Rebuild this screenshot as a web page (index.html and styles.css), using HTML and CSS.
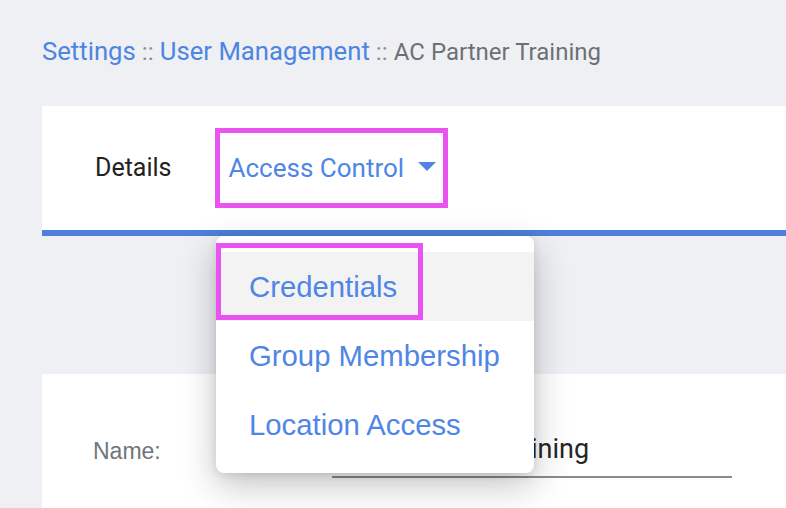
FILE: index.html
```html
<!DOCTYPE html>
<html lang="en">
<head>
<meta charset="utf-8">
<title>AC Partner Training</title>
<link rel="stylesheet" href="styles.css">
</head>
<body>
<div class="page">
  <nav class="breadcrumb">
    <a class="crumb-link">Settings</a><span class="sep"> :: </span><a class="crumb-link">User Management</a><span class="sep"> :: </span><span class="crumb-current">AC Partner Training</span>
  </nav>

  <div class="tabs-area">
    <div class="tab-bar">
      <div class="tab">Details</div>
      <div class="tab tab-active">
        <span class="tab-label">Access Control</span>
        <svg class="caret" width="18" height="9" viewBox="0 0 18 9"><polygon points="0,0 18,0 9,9" fill="#4f84e2"/></svg>
      </div>
    </div>

    <div class="menu">
      <div class="menu-item menu-item-hover">Credentials</div>
      <div class="menu-item">Group Membership</div>
      <div class="menu-item">Location Access</div>
      <div class="menu-mark"></div>
    </div>
  </div>

  <section class="panel">
    <div class="form-row">
      <label class="form-label">Name:</label>
      <div class="form-input">AC Partner Training</div>
    </div>
  </section>
</div>
</body>
</html>
```

FILE: styles.css
```css
html, body {
  margin: 0;
  padding: 0;
}

body {
  background: #eff0f4;
  font-family: Roboto, "Liberation Sans", sans-serif;
  width: 786px;
  height: 508px;
  overflow: hidden;
}

.page {
  padding-left: 42px;
}

.breadcrumb {
  padding-top: 36px;
  height: 30px;
  line-height: 30px;
  white-space: nowrap;
}

.crumb-link {
  font-size: 25.7px;
  color: #4d85e2;
}

.sep {
  font-size: 24.5px;
  color: #8a8e94;
}

.crumb-current {
  font-size: 24px;
  color: #6c7075;
}

.tabs-area {
  position: relative;
  margin-top: 40px;
}

.tab-bar {
  height: 124px;
  background: #ffffff;
  border-bottom: 6px solid #4d80da;
  display: flex;
  align-items: center;
  padding-left: 53px;
}

.tab {
  font-size: 25px;
  line-height: 30px;
  color: #222222;
}

.tab-active {
  margin-left: 43px;
  box-sizing: border-box;
  width: 233px;
  height: 80px;
  border: 5px solid #ea52f2;
  padding-left: 9px;
  display: flex;
  align-items: center;
  color: #4f86e6;
}

.tab-label {
  font-size: 26px;
}

.caret {
  margin-left: 14px;
  margin-top: -3px;
}

.menu {
  position: absolute;
  left: 174px;
  top: 130px;
  width: 318px;
  height: 237px;
  box-sizing: border-box;
  padding-top: 16px;
  background: #ffffff;
  border-radius: 8px;
  box-shadow: 0 12px 36px rgba(0, 0, 0, 0.24), 0 2px 10px rgba(0, 0, 0, 0.10);
  z-index: 5;
}

.menu-item {
  height: 69px;
  line-height: 69px;
  padding-left: 33px;
  font-family: "Liberation Sans", Arial, sans-serif;
  font-size: 29.3px;
  color: #4f86e6;
}

.menu-item-hover {
  background: #f3f3f4;
}

.menu-mark {
  position: absolute;
  left: 0;
  top: 7px;
  width: 207px;
  height: 77px;
  box-sizing: border-box;
  border: 5px solid #ea52f2;
}

.panel {
  margin-top: 138px;
  background: #ffffff;
  height: 134px;
}

.form-row {
  display: flex;
  align-items: flex-start;
  padding-top: 60px;
  padding-left: 51px;
}

.form-label {
  width: 239px;
  font-family: "Liberation Sans", Arial, sans-serif;
  font-size: 23px;
  line-height: 34px;
  color: #70757a;
}

.form-input {
  width: 400px;
  box-sizing: border-box;
  margin-top: -2px;
  padding-left: 24px;
  padding-bottom: 10px;
  border-bottom: 2px solid #8c8c8c;
  font-size: 27px;
  line-height: 34px;
  color: #262626;
  white-space: nowrap;
}
```
